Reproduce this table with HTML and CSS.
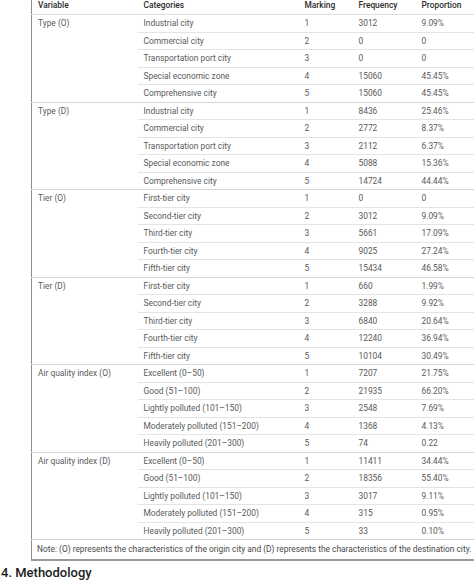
FILE: index.html
```html
<!DOCTYPE html>
<html>
<head>
<meta charset="utf-8">
<link rel="stylesheet" href="styles.css">
</head>
<body>
<div class="page">
<table class="data">
  <colgroup>
    <col class="c-var"><col class="c-cat"><col class="c-mark"><col class="c-freq"><col class="c-prop">
  </colgroup>
  <thead>
    <tr><th>Variable</th><th>Categories</th><th>Marking</th><th>Frequency</th><th>Proportion</th></tr>
  </thead>
  <tbody>
    <tr class="grp"><td rowspan="5" class="var">Type (O)</td><td>Industrial city</td><td>1</td><td>3012</td><td>9.09%</td></tr>
    <tr><td>Commercial city</td><td>2</td><td>0</td><td>0</td></tr>
    <tr><td>Transportation port city</td><td>3</td><td>0</td><td>0</td></tr>
    <tr><td>Special economic zone</td><td>4</td><td>15060</td><td>45.45%</td></tr>
    <tr><td>Comprehensive city</td><td>5</td><td>15060</td><td>45.45%</td></tr>

    <tr class="grp"><td rowspan="5" class="var">Type (D)</td><td>Industrial city</td><td>1</td><td>8436</td><td>25.46%</td></tr>
    <tr><td>Commercial city</td><td>2</td><td>2772</td><td>8.37%</td></tr>
    <tr><td>Transportation port city</td><td>3</td><td>2112</td><td>6.37%</td></tr>
    <tr><td>Special economic zone</td><td>4</td><td>5088</td><td>15.36%</td></tr>
    <tr><td>Comprehensive city</td><td>5</td><td>14724</td><td>44.44%</td></tr>

    <tr class="grp"><td rowspan="5" class="var">Tier (O)</td><td>First-tier city</td><td>1</td><td>0</td><td>0</td></tr>
    <tr><td>Second-tier city</td><td>2</td><td>3012</td><td>9.09%</td></tr>
    <tr><td>Third-tier city</td><td>3</td><td>5661</td><td>17.09%</td></tr>
    <tr><td>Fourth-tier city</td><td>4</td><td>9025</td><td>27.24%</td></tr>
    <tr><td>Fifth-tier city</td><td>5</td><td>15434</td><td>46.58%</td></tr>

    <tr class="grp"><td rowspan="5" class="var">Tier (D)</td><td>First-tier city</td><td>1</td><td>660</td><td>1.99%</td></tr>
    <tr><td>Second-tier city</td><td>2</td><td>3288</td><td>9.92%</td></tr>
    <tr><td>Third-tier city</td><td>3</td><td>6840</td><td>20.64%</td></tr>
    <tr><td>Fourth-tier city</td><td>4</td><td>12240</td><td>36.94%</td></tr>
    <tr><td>Fifth-tier city</td><td>5</td><td>10104</td><td>30.49%</td></tr>

    <tr class="grp"><td rowspan="5" class="var">Air quality index (O)</td><td>Excellent (0–50)</td><td>1</td><td>7207</td><td>21.75%</td></tr>
    <tr><td>Good (51–100)</td><td>2</td><td>21935</td><td>66.20%</td></tr>
    <tr><td>Lightly polluted (101–150)</td><td>3</td><td>2548</td><td>7.69%</td></tr>
    <tr><td>Moderately polluted (151–200)</td><td>4</td><td>1368</td><td>4.13%</td></tr>
    <tr><td>Heavily polluted (201–300)</td><td>5</td><td>74</td><td>0.22</td></tr>

    <tr class="grp"><td rowspan="5" class="var">Air quality index (D)</td><td>Excellent (0–50)</td><td>1</td><td>11411</td><td>34.44%</td></tr>
    <tr><td>Good (51–100)</td><td>2</td><td>18356</td><td>55.40%</td></tr>
    <tr><td>Lightly polluted (101–150)</td><td>3</td><td>3017</td><td>9.11%</td></tr>
    <tr><td>Moderately polluted (151–200)</td><td>4</td><td>315</td><td>0.95%</td></tr>
    <tr><td>Heavily polluted (201–300)</td><td>5</td><td>33</td><td>0.10%</td></tr>
  </tbody>
  <tfoot>
    <tr><td colspan="5" class="note">Note: (O) represents the characteristics of the origin city and (D) represents the characteristics of the destination city.</td></tr>
  </tfoot>
</table>
<h2 class="section">4. Methodology</h2>
</div>
</body>
</html>
```
FILE: styles.css
```css
html, body {
  margin: 0;
  padding: 0;
  background: #ffffff;
}
body {
  width: 474px;
  height: 588px;
  overflow: hidden;
  font-family: Roboto, "Liberation Sans", sans-serif;
}
.page {
  width: 474px;
}
.data {
  margin-left: 31px;
  width: 452px;
  border-collapse: collapse;
  table-layout: fixed;
  font-size: 8.4px;
  color: #5a5a5a;
  border-left: 1px solid #8c8c8c;
}
.c-var { width: 106px; }
.c-cat { width: 161px; }
.c-mark { width: 54px; }
.c-freq { width: 63px; }
.c-prop { width: 68px; }

.data th {
  text-align: left;
  font-weight: 500;
  color: #2b2b2b;
  height: 10px;
  line-height: 10px;
  padding: 0 6px 4px 6px;
  border-bottom: 1px solid #dcdcdc;
  white-space: nowrap;
}
.data td {
  height: 16.5px;
  line-height: 16.5px;
  padding: 0 6px 0 6px;
  white-space: nowrap;
  border-top: 1px solid #e4e4e4;
  vertical-align: middle;
}
.data td.var {
  vertical-align: top;
}
.data tr.grp td {
  border-top: 1px solid #d6d6d6;
}
.data td.note {
  height: 19px;
  line-height: 19px;
  padding-left: 5px;
  border-top: 1px solid #d0d0d0;
  border-bottom: 2px solid #9a9a9a;
  color: #4a4a4a;
}
.section {
  margin: 2px 0 0 1px;
  font-size: 13px;
  font-weight: 500;
  color: #1c1c1c;
  line-height: 20px;
}
```
